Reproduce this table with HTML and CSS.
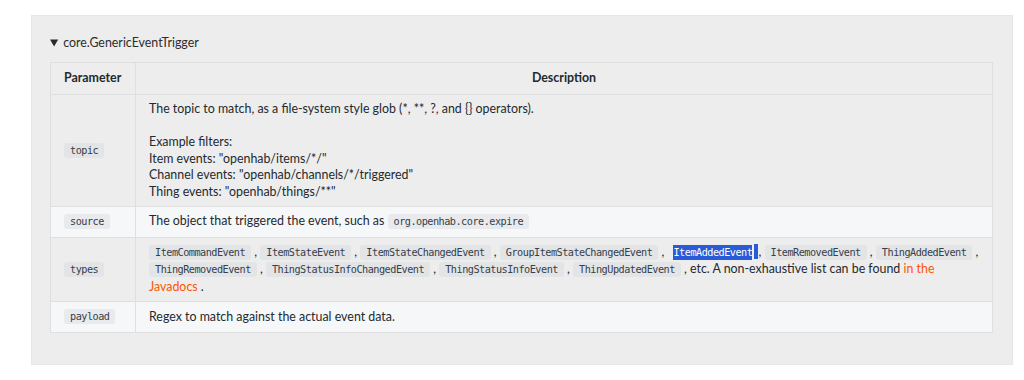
FILE: index.html
```html
<!DOCTYPE html>
<html lang="en">
<head>
    <meta charset="UTF-8">
    <meta name="viewport" content="width=device-width, initial-scale=1.0">
    <title>core.GenericEventTrigger</title>
    <link rel="stylesheet" href="styles.css">
</head>
<body>
    <div class="box">
        <details open>
            <summary>core.GenericEventTrigger</summary>
            <table class="params">
                <thead>
                    <tr>
                        <th class="col-param">Parameter</th>
                        <th>Description</th>
                    </tr>
                </thead>
                <tbody>
                    <tr>
                        <td class="col-param"><code>topic</code></td>
                        <td>The topic to match, as a file-system style glob (*, **, ?, and {} operators).<br><br>Example filters:<br>Item events: "openhab/items/*/"<br>Channel events: "openhab/channels/*/triggered"<br>Thing events: "openhab/things/**"</td>
                    </tr>
                    <tr>
                        <td class="col-param"><code>source</code></td>
                        <td>The object that triggered the event, such as <code>org.openhab.core.expire</code></td>
                    </tr>
                    <tr>
                        <td class="col-param"><code>types</code></td>
                        <td><code>ItemCommandEvent</code> , <code>ItemStateEvent</code> , <code>ItemStateChangedEvent</code> , <code>GroupItemStateChangedEvent</code> , <code class="picked">ItemAddedEvent</code><span class="picked-gap"> </span>, <code>ItemRemovedEvent</code> , <code>ThingAddedEvent</code> , <code>ThingRemovedEvent</code> , <code>ThingStatusInfoChangedEvent</code> , <code>ThingStatusInfoEvent</code> , <code>ThingUpdatedEvent</code> , etc. A non-exhaustive list can be found <a href="#">in the Javadocs</a> .</td>
                    </tr>
                    <tr>
                        <td class="col-param"><code>payload</code></td>
                        <td>Regex to match against the actual event data.</td>
                    </tr>
                </tbody>
            </table>
        </details>
    </div>
</body>
</html>
```

FILE: styles.css
```css
body {
    margin: 0;
    padding: 15px 11px 0 31px;
    font-family: Lato, "Noto Sans", sans-serif;
    font-size: 12.4px;
    line-height: 16.5px;
    color: #24292e;
    background: #fff;
}
.box {
    background: #ededed;
    border: 1px solid #e6e6e6;
    padding: 19px 19px 31px 18px;
}
summary {
    cursor: pointer;
    font-size: 12.4px;
    color: #2c2c2c;
}
.params {
    width: 100%;
    margin-top: 10px;
    border-collapse: collapse;
}
.params th,
.params td {
    border: 1px solid #dfdfdf;
    padding: 6px 13px;
    text-align: left;
    vertical-align: middle;
}
.params th {
    text-align: center;
    font-weight: bold;
    padding: 7.5px 13px;
}
.params th.col-param {
    text-align: left;
}
.params .col-param {
    width: 58px;
}
.params tbody tr:nth-child(even) {
    background: #f6f7f9;
}
code {
    font-family: "DejaVu Sans Mono", monospace;
    font-size: 10.2px;
    letter-spacing: -0.5px;
    background: #e3e4e6;
    color: #36404a;
    padding: 2px 6px;
    border-radius: 3px;
    line-height: 16.5px;
}
tr:nth-child(even) code {
    background: #e8eaed;
}
code.picked {
    background: #2a5bd7;
    color: #fff;
    padding: 2px 0;
    margin: 0 2px 0 6px;
    border-radius: 0;
}
.picked-gap {
    background: #2a5bd7;
    margin-right: 1px;
}
a {
    color: #ff5500;
    text-decoration: none;
}
```
